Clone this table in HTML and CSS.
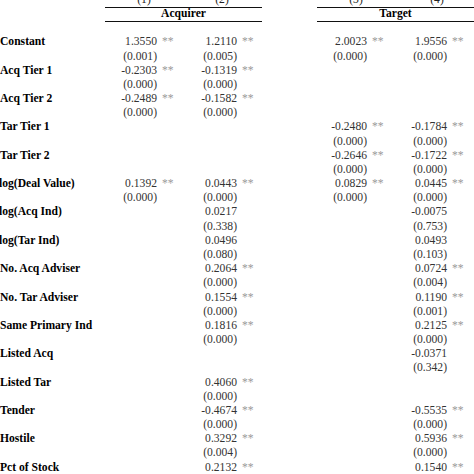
FILE: index.html
```html
<!DOCTYPE html>
<html>
<head>
<meta charset="utf-8">
<link rel="stylesheet" href="styles.css">
</head>
<body>
<div class="table">
  <div class="row head">
    <div class="grp g1"><span class="hd hd1">(1)</span><span class="hd hd2">(2)</span></div>
    <div class="grp g2"><span class="hd hd3">(3)</span><span class="hd hd4">(4)</span></div>
  </div>
  <div class="row">
    <div class="grp g1 title">Acquirer</div>
    <div class="grp g2 title">Target</div>
  </div>
  <div class="row"></div>

  <div class="row"><span class="lbl">Constant</span><span class="n n1">1.3550</span><span class="s s1">**</span><span class="n n2">1.2110</span><span class="s s2">**</span><span class="n n3">2.0023</span><span class="s s3">**</span><span class="n n4">1.9556</span><span class="s s4">**</span></div>
  <div class="row"><span class="n n1">(0.001)</span><span class="n n2">(0.005)</span><span class="n n3">(0.000)</span><span class="n n4">(0.000)</span></div>

  <div class="row"><span class="lbl">Acq Tier 1</span><span class="n n1">-0.2303</span><span class="s s1">**</span><span class="n n2">-0.1319</span><span class="s s2">**</span></div>
  <div class="row"><span class="n n1">(0.000)</span><span class="n n2">(0.000)</span></div>

  <div class="row"><span class="lbl">Acq Tier 2</span><span class="n n1">-0.2489</span><span class="s s1">**</span><span class="n n2">-0.1582</span><span class="s s2">**</span></div>
  <div class="row"><span class="n n1">(0.000)</span><span class="n n2">(0.000)</span></div>

  <div class="row"><span class="lbl">Tar Tier 1</span><span class="n n3">-0.2480</span><span class="s s3">**</span><span class="n n4">-0.1784</span><span class="s s4">**</span></div>
  <div class="row"><span class="n n3">(0.000)</span><span class="n n4">(0.000)</span></div>

  <div class="row"><span class="lbl">Tar Tier 2</span><span class="n n3">-0.2646</span><span class="s s3">**</span><span class="n n4">-0.1722</span><span class="s s4">**</span></div>
  <div class="row"><span class="n n3">(0.000)</span><span class="n n4">(0.000)</span></div>

  <div class="row"><span class="lbl cut">log(Deal Value)</span><span class="n n1">0.1392</span><span class="s s1">**</span><span class="n n2">0.0443</span><span class="s s2">**</span><span class="n n3">0.0829</span><span class="s s3">**</span><span class="n n4">0.0445</span><span class="s s4">**</span></div>
  <div class="row"><span class="n n1">(0.000)</span><span class="n n2">(0.000)</span><span class="n n3">(0.000)</span><span class="n n4">(0.000)</span></div>

  <div class="row"><span class="lbl cut">log(Acq Ind)</span><span class="n n2">0.0217</span><span class="n n4">-0.0075</span></div>
  <div class="row"><span class="n n2">(0.338)</span><span class="n n4">(0.753)</span></div>

  <div class="row"><span class="lbl cut">log(Tar Ind)</span><span class="n n2">0.0496</span><span class="n n4">0.0493</span></div>
  <div class="row"><span class="n n2">(0.080)</span><span class="n n4">(0.103)</span></div>

  <div class="row"><span class="lbl">No. Acq Adviser</span><span class="n n2">0.2064</span><span class="s s2">**</span><span class="n n4">0.0724</span><span class="s s4">**</span></div>
  <div class="row"><span class="n n2">(0.000)</span><span class="n n4">(0.004)</span></div>

  <div class="row"><span class="lbl">No. Tar Adviser</span><span class="n n2">0.1554</span><span class="s s2">**</span><span class="n n4">0.1190</span><span class="s s4">**</span></div>
  <div class="row"><span class="n n2">(0.000)</span><span class="n n4">(0.001)</span></div>

  <div class="row"><span class="lbl">Same Primary Ind</span><span class="n n2">0.1816</span><span class="s s2">**</span><span class="n n4">0.2125</span><span class="s s4">**</span></div>
  <div class="row"><span class="n n2">(0.000)</span><span class="n n4">(0.000)</span></div>

  <div class="row"><span class="lbl">Listed Acq</span><span class="n n4">-0.0371</span></div>
  <div class="row"><span class="n n4">(0.342)</span></div>

  <div class="row"><span class="lbl">Listed Tar</span><span class="n n2">0.4060</span><span class="s s2">**</span></div>
  <div class="row"><span class="n n2">(0.000)</span></div>

  <div class="row"><span class="lbl">Tender</span><span class="n n2">-0.4674</span><span class="s s2">**</span><span class="n n4">-0.5535</span><span class="s s4">**</span></div>
  <div class="row"><span class="n n2">(0.000)</span><span class="n n4">(0.000)</span></div>

  <div class="row"><span class="lbl">Hostile</span><span class="n n2">0.3292</span><span class="s s2">**</span><span class="n n4">0.5936</span><span class="s s4">**</span></div>
  <div class="row"><span class="n n2">(0.004)</span><span class="n n4">(0.000)</span></div>

  <div class="row"><span class="lbl">Pct of Stock</span><span class="n n2">0.2132</span><span class="s s2">**</span><span class="n n4">0.1540</span><span class="s s4">**</span></div>
  <div class="row"><span class="n n2">(0.000)</span><span class="n n4">(0.000)</span></div>
</div>
</body>
</html>
```
FILE: styles.css
```css
html, body {
  margin: 0;
  padding: 0;
  background: #ffffff;
  overflow: hidden;
}
body {
  width: 474px;
  height: 474px;
  font-family: "Liberation Serif", "Times New Roman", serif;
  font-size: 11.6px;
  color: #333333;
}
.table {
  margin-top: -7.1px;
  display: flex;
  flex-direction: column;
}
.row {
  display: grid;
  grid-template-columns: 105px 52px 30px 50px 25px 55px 50px 30px 50px 27px;
  height: 14.18px;
  line-height: 14.18px;
  white-space: nowrap;
}
.lbl {
  grid-column: 1 / 5;
  grid-row: 1;
  font-weight: bold;
  color: #000000;
}
.lbl.cut {
  margin-left: -1px;
}
.n {
  text-align: right;
  grid-row: 1;
}
.s {
  grid-row: 1;
  padding-left: 5px;
  color: #9a9a9a;
}
.n1 { grid-column: 2; }
.s1 { grid-column: 3; }
.n2 { grid-column: 4; }
.s2 { grid-column: 5; }
.n3 { grid-column: 7; }
.s3 { grid-column: 8; }
.n4 { grid-column: 9; }
.s4 { grid-column: 10; }

.grp {
  grid-row: 1;
  box-sizing: border-box;
}
.g1 { grid-column: 2 / 6; }
.g2 { grid-column: 7 / 11; }
.head .grp {
  display: grid;
  border-bottom: 1.3px solid #111111;
}
.head .g1 { grid-template-columns: 82px 75px; }
.head .g2 { grid-template-columns: 80px 77px; }
.hd {
  text-align: center;
  color: #222222;
}
.hd1 { padding-right: 4px; }
.hd2 { padding-right: 5px; }
.hd3 { padding-right: 2px; }
.hd4 { padding-left: 3px; }
.title {
  text-align: center;
  font-weight: bold;
  color: #000000;
  border-bottom: 1.7px solid #111111;
}
```
